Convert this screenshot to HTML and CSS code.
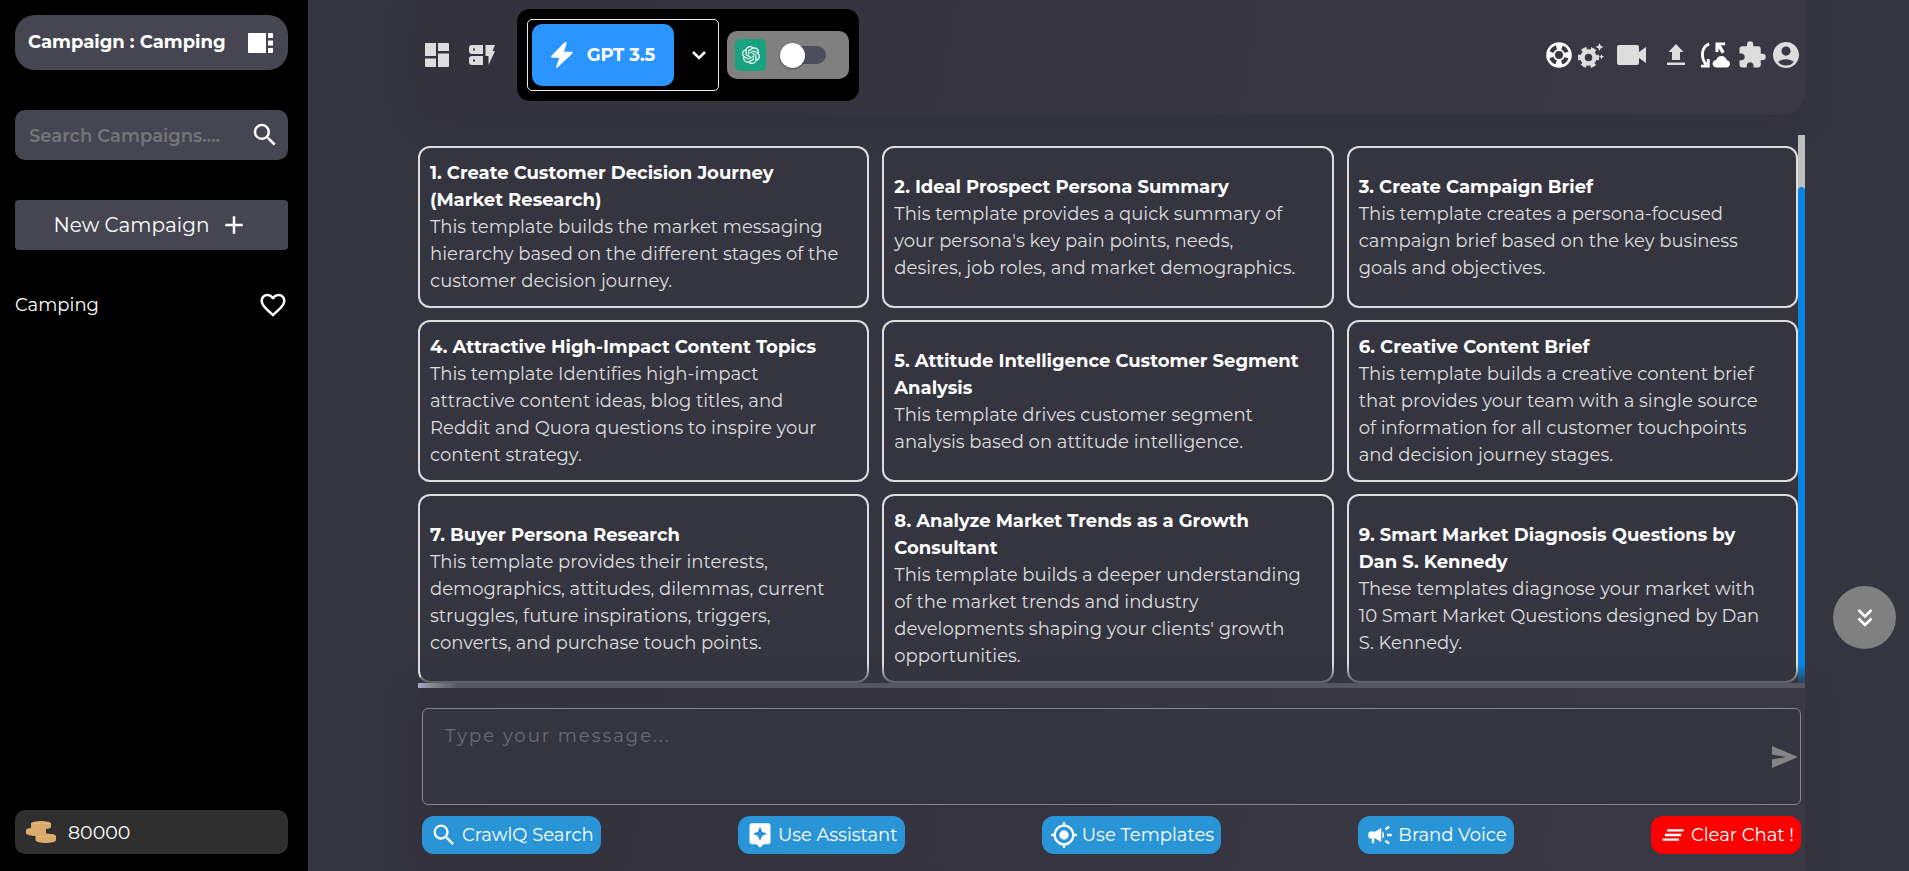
FILE: index.html
```html
<!DOCTYPE html>
<html lang="en">
<head>
  <meta charset="UTF-8" />
  <meta name="viewport" content="width=device-width, initial-scale=1" />
  <title>CrawlQ</title>
  <link rel="stylesheet" href="styles.css">
</head>
<body>
<aside class="sidebar">
  <div class="campaign-head">
    <span>Campaign : Camping</span>
    <button class="icon-btn" aria-label="Toggle sidebar">
      <svg width="26" height="20" viewBox="0 0 26 20"><path d="M0 1a1 1 0 0 1 1-1h17v20H1a1 1 0 0 1-1-1zM20 0h4a1 1 0 0 1 1 1v4h-5zM20 7.500h5v5h-5zM20 15h5v4a1 1 0 0 1-1 1h-4z"/></svg>
    </button>
  </div>
  <div class="search">
    <input type="text" placeholder="Search Campaigns...." aria-label="Search campaigns">
    <button class="icon-btn" aria-label="Search">
      <svg width="30" height="30" viewBox="0 0 24 24"><path d="M15.500 14h-.79l-.28-.27A6.470 6.470 0 0 0 16 9.500 6.500 6.500 0 1 0 9.500 16c1.610 0 3.090-.59 4.230-1.570l.27.28v.79l5 4.990L20.490 19l-4.990-5zm-6 0C7.010 14 5 11.990 5 9.500S7.010 5 9.500 5 14 7.010 14 9.500 11.990 14 9.500 14z"/></svg>
    </button>
  </div>
  <button class="new-campaign">
    New Campaign
    <svg width="30" height="30" viewBox="0 0 24 24"><path d="M19 13h-6v6h-2v-6H5v-2h6V5h2v6h6v2z"/></svg>
  </button>
  <div class="campaign-row">
    <a href="#">Camping</a>
    <button class="icon-btn" aria-label="Favourite">
      <svg width="30" height="30" viewBox="0 0 24 24"><path d="M16.500 3c-1.740 0-3.410.81-4.500 2.090C10.910 3.810 9.240 3 7.500 3 4.420 3 2 5.420 2 8.500c0 3.780 3.400 6.860 8.550 11.540L12 21.350l1.450-1.320C18.600 15.360 22 12.280 22 8.500 22 5.420 19.580 3 16.500 3zm-4.400 15.550-.1.100-.1-.1C7.140 14.240 4 11.390 4 8.500 4 6.500 5.500 5 7.500 5c1.540 0 3.040.99 3.570 2.360h1.870C13.460 5.990 14.960 5 16.500 5c2 0 3.500 1.500 3.500 3.500 0 2.890-3.140 5.740-7.900 10.050z"/></svg>
    </button>
  </div>
  <div class="tokens">
    <svg width="30" height="22" viewBox="0 0 30 22"><g fill="#d8ab6a"><path d="M5 2.500C5 1 10 0 15 0s10 1 10 2.500V6c0 1-2 1.600-5 2v4c0 2-5 3-10 3S0 14 0 12V9c0-1 2-1.800 5-2z"/><path d="M9.500 15c0-1.500 5-2.500 10.200-2.500S30 13.500 30 15v4c0 1.800-5 3-10.200 3S9.500 21 9.500 19z"/></g><path d="M7 2.600h17M2 9h3M12 15.400h17" stroke="#f0cf97" stroke-width=".8" stroke-dasharray="1 1" fill="none"/></svg>
    <span>80000</span>
  </div>
</aside>

<main class="main">
  <header class="topbar">
    <div class="tools-left">
      <button class="icon-btn" aria-label="Dashboard">
        <svg width="24" height="24" viewBox="0 0 24 24"><path d="M1 0h10v13H0V1a1 1 0 0 1 1-1zM13 0h10a1 1 0 0 1 1 1v7H13zM13 10.500h11V23a1 1 0 0 1-1 1H13zM0 15.500h11V24H1a1 1 0 0 1-1-1z"/></svg>
      </button>
      <button class="icon-btn" aria-label="Prompts">
        <svg width="26" height="20" viewBox="0 0 26 20"><path fill-rule="evenodd" d="M3 0h11v9H3a3 3 0 0 1-3-3V3a3 3 0 0 1 3-3zm1 3.500v2h2v-2zM3 11h11v9H3a3 3 0 0 1-3-3v-3a3 3 0 0 1 3-3zm1 3.500v2h2v-2zM16.500 0H26l-2.500 6H26l-6.500 14v-9h-3z"/></svg>
      </button>
    </div>
    <div class="model-panel">
      <div class="model-select">
        <button class="model-btn">
          <svg width="22" height="26" viewBox="0 0 22 26"><path d="M14.500 0c1 0 1.300.7 1.100 1.500L13 9.800h7.200c1.500 0 1.700 1.300.7 2.200L6.500 25.500c-.8.700-1.700.2-1.400-.8l3.200-9H1.500C0 15.700-.4 14.300.6 13.400L13.400.5c.3-.3.700-.5 1.100-.5z"/></svg>
          GPT 3.5
        </button>
        <button class="icon-btn chevron" aria-label="Choose model">
          <svg width="16" height="10" viewBox="0 0 16 10"><path d="M2 2l6 6 6-6" fill="none" stroke="#fff" stroke-width="2.600"/></svg>
        </button>
      </div>
      <label class="plugin">
        <span class="plugin-logo">
          <svg width="18" height="18" viewBox="0 0 24 24"><path d="M22.282 9.821a5.985 5.985 0 0 0-.516-4.910 6.046 6.046 0 0 0-6.510-2.900A6.065 6.065 0 0 0 4.981 4.182a5.985 5.985 0 0 0-3.998 2.900 6.046 6.046 0 0 0 .743 7.097 5.980 5.980 0 0 0 .51 4.911 6.051 6.051 0 0 0 6.515 2.900A5.985 5.985 0 0 0 13.260 24a6.056 6.056 0 0 0 5.772-4.206 5.990 5.990 0 0 0 3.998-2.900 6.056 6.056 0 0 0-.748-7.073zM13.260 22.430a4.476 4.476 0 0 1-2.877-1.040l.142-.081 4.779-2.758a.795.795 0 0 0 .393-.681v-6.737l2.020 1.169a.071.071 0 0 1 .038.052v5.583a4.504 4.504 0 0 1-4.495 4.493zM3.600 18.304a4.471 4.471 0 0 1-.535-3.014l.142.085 4.783 2.759a.771.771 0 0 0 .781 0l5.843-3.369v2.332a.08.08 0 0 1-.033.062L9.740 19.950a4.500 4.500 0 0 1-6.140-1.646zM2.341 7.896a4.485 4.485 0 0 1 2.366-1.973V11.600a.766.766 0 0 0 .388.677l5.815 3.355-2.020 1.168a.076.076 0 0 1-.071 0l-4.830-2.787A4.504 4.504 0 0 1 2.341 7.872zm16.596 3.856l-5.833-3.388L15.119 7.200a.076.076 0 0 1 .071 0l4.830 2.791a4.494 4.494 0 0 1-.676 8.105v-5.678a.79.79 0 0 0-.407-.666zm2.011-3.023l-.142-.085-4.774-2.782a.776.776 0 0 0-.785 0L9.409 9.230V6.897a.066.066 0 0 1 .028-.061l4.830-2.787a4.500 4.500 0 0 1 6.681 4.660zM8.306 12.863l-2.020-1.164a.08.08 0 0 1-.038-.057V6.075a4.500 4.500 0 0 1 7.376-3.453l-.142.081-4.779 2.758a.795.795 0 0 0-.393.681zm1.098-2.365l2.602-1.500 2.607 1.500v2.999l-2.597 1.500-2.607-1.500z"/></svg>
        </span>
        <input type="checkbox" class="switch" aria-label="ChatGPT">
      </label>
    </div>
    <nav class="tools-right">
      <button class="icon-btn bright" aria-label="Support">
        <svg width="26" height="26" viewBox="0 0 26 26"><g fill="none" stroke="#fff"><circle cx="13" cy="13" r="11.500" stroke-width="2.600"/><circle cx="13" cy="13" r="8" stroke-width="6" stroke-dasharray="5.600 6.966" transform="rotate(-20 13 13)"/><circle cx="13" cy="13" r="5" stroke-width="2"/></g></svg>
      </button>
      <button class="icon-btn" aria-label="Settings">
        <svg width="26" height="26" viewBox="0 0 26 26"><circle cx="10.500" cy="15.500" r="6" fill="none" stroke="#ddd" stroke-width="4.500"/><circle cx="10.500" cy="15.500" r="8.800" fill="none" stroke="#ddd" stroke-width="3.600" stroke-dasharray="5.200 4.015" transform="rotate(-17 10.500 15.500)"/><path d="M21.500 1l1.200 2.800 2.800 1.200-2.800 1.200-1.200 2.800-1.200-2.800-2.800-1.200 2.800-1.200zM23.500 12l.8 1.900 1.900.8-1.900.8-.8 1.900-.8-1.900-1.900-.8 1.900-.8z"/></svg>
      </button>
      <button class="icon-btn video" aria-label="Video">
        <svg width="29" height="20" viewBox="0 0 29 20"><path d="M2 0h18a2 2 0 0 1 2 2v5l7-5v16l-7-5v5a2 2 0 0 1-2 2H2a2 2 0 0 1-2-2V2a2 2 0 0 1 2-2z"/></svg>
      </button>
      <button class="icon-btn upload" aria-label="Upload">
        <svg width="18" height="22" viewBox="0 0 18 22"><path d="M9 0l7.500 8H13v8H5V8H1.500zM0 18.500h18V21H0z"/></svg>
      </button>
      <button class="icon-btn bright" aria-label="Sync">
        <svg width="31" height="26" viewBox="0 0 32 26"><path d="M9.500 1.500C1 5 .5 16 6.500 23" fill="none" stroke="#fff" stroke-width="3"/><path d="M1 23h6v-6h3v9H1zM16 0h10v3h-4.500l4 7-3 1.500L19 6v4h-3zM17.500 26c-2.600 0-4.500-1.600-4.500-4 0-2.200 1.500-3.700 3.800-3.900.6-2.500 2.700-4.100 5.300-4.100 2.800 0 5 1.800 5.400 4.400 2.100.1 3.500 1.600 3.500 3.600 0 2.300-1.700 4-4 4z"/></svg>
      </button>
      <button class="icon-btn" aria-label="Extensions">
        <svg width="30" height="30" viewBox="0 0 24 24"><path d="M20.500 11H19V7c0-1.100-.9-2-2-2h-4V3.500a2.500 2.500 0 0 0-5 0V5H4c-1.100 0-1.990.9-1.990 2v3.800H3.500c1.490 0 2.700 1.210 2.700 2.700s-1.210 2.700-2.700 2.700H2V20c0 1.100.9 2 2 2h3.800v-1.500c0-1.490 1.210-2.700 2.700-2.700s2.700 1.210 2.700 2.700V22H17c1.100 0 2-.9 2-2v-4h1.500a2.500 2.500 0 0 0 0-5z"/></svg>
      </button>
      <button class="icon-btn" aria-label="Account">
        <svg width="26" height="26" viewBox="2 2 20 20"><path d="M12 2C6.480 2 2 6.480 2 12s4.480 10 10 10 10-4.480 10-10S17.520 2 12 2zm0 3.500c1.930 0 3.500 1.570 3.500 3.500s-1.570 3.500-3.500 3.500S8.500 10.930 8.500 9s1.570-3.500 3.500-3.500zM12 20a8 8 0 0 1-6-2.700c1.400-1.400 3.900-2.100 6-2.100s4.600.7 6 2.100A8 8 0 0 1 12 20z"/></svg>
      </button>
    </nav>
  </header>

  <section class="templates">
    <div class="cards">
      <article class="card"><h3>1. Create Customer Decision Journey (Market Research)</h3><p>This template builds the market messaging hierarchy based on the different stages of the customer decision journey.</p></article>
      <article class="card"><h3>2. Ideal Prospect Persona Summary</h3><p>This template provides a quick summary of your persona's key pain points, needs, desires, job roles, and market demographics.</p></article>
      <article class="card"><h3>3. Create Campaign Brief</h3><p>This template creates a persona-focused campaign brief based on the key business goals and objectives.</p></article>
      <article class="card"><h3>4. Attractive High-Impact Content Topics</h3><p>This template Identifies high-impact attractive content ideas, blog titles, and Reddit and Quora questions to inspire your content strategy.</p></article>
      <article class="card"><h3>5. Attitude Intelligence Customer Segment Analysis</h3><p>This template drives customer segment analysis based on attitude intelligence.</p></article>
      <article class="card"><h3>6. Creative Content Brief</h3><p>This template builds a creative content brief that provides your team with a single source of information for all customer touchpoints and decision journey stages.</p></article>
      <article class="card"><h3>7. Buyer Persona Research</h3><p>This template provides their interests, demographics, attitudes, dilemmas, current struggles, future inspirations, triggers, converts, and purchase touch points.</p></article>
      <article class="card"><h3>8. Analyze Market Trends as a Growth Consultant</h3><p>This template builds a deeper understanding of the market trends and industry developments shaping your clients' growth opportunities.</p></article>
      <article class="card"><h3>9. Smart Market Diagnosis Questions by Dan S. Kennedy</h3><p>These templates diagnose your market with 10 Smart Market Questions designed by Dan S. Kennedy.</p></article>
    </div>
    <div class="scroll-y"><span class="thumb"></span></div>
    <div class="scroll-x"></div>
    <div class="fade"></div>
  </section>

  <footer class="composer">
    <div class="message">
      <textarea placeholder="Type your message..." aria-label="Message"></textarea>
      <button class="icon-btn send" aria-label="Send">
        <svg width="26" height="22" viewBox="0 0 26 22"><path d="M0 0l26 11L0 22v-8.500L14 11 0 8.500z"/></svg>
      </button>
    </div>
    <div class="actions">
      <button class="action">
        <svg width="28" height="28" viewBox="0 0 24 24"><path d="M15.500 14h-.79l-.28-.27A6.470 6.470 0 0 0 16 9.500 6.500 6.500 0 1 0 9.500 16c1.610 0 3.090-.59 4.230-1.570l.27.28v.79l5 4.990L20.490 19l-4.990-5zm-6 0C7.010 14 5 11.990 5 9.500S7.010 5 9.500 5 14 7.010 14 9.500 11.990 14 9.500 14z"/></svg>
        CrawlQ Search
      </button>
      <button class="action">
        <svg width="28" height="28" viewBox="0 0 24 24"><path d="M19 2H5a2 2 0 0 0-2 2v14a2 2 0 0 0 2 2h4l3 3 3-3h4a2 2 0 0 0 2-2V4a2 2 0 0 0-2-2zm-5.120 10.880L12 17l-1.880-4.120L6 11l4.120-1.880L12 5l1.880 4.120L18 11z"/></svg>
        Use Assistant
      </button>
      <button class="action">
        <svg width="28" height="28" viewBox="0 0 24 24"><path d="M12 8a4 4 0 1 0 0 8 4 4 0 0 0 0-8zm8.940 3A8.994 8.994 0 0 0 13 3.060V1h-2v2.060A8.994 8.994 0 0 0 3.060 11H1v2h2.060A8.994 8.994 0 0 0 11 20.940V23h2v-2.060A8.994 8.994 0 0 0 20.940 13H23v-2zM12 19a7 7 0 1 1 0-14 7 7 0 0 1 0 14z"/></svg>
        Use Templates
      </button>
      <button class="action">
        <svg width="28" height="28" viewBox="0 0 24 24"><path d="M18 11v2h4v-2zm-2 6.610c.96.71 2.210 1.650 3.200 2.390.4-.53.800-1.070 1.200-1.600-.99-.74-2.240-1.680-3.200-2.400-.4.540-.8 1.080-1.200 1.610zM20.400 5.600c-.4-.53-.8-1.070-1.200-1.600-.99.740-2.240 1.680-3.200 2.400.4.530.8 1.070 1.200 1.600.96-.72 2.210-1.650 3.200-2.400zM4 9c-1.100 0-2 .9-2 2v2c0 1.100.9 2 2 2h1v4h2v-4h1l5 3V6L8 9zm11.500 3c0-1.330-.58-2.530-1.500-3.350v6.690c.92-.81 1.500-2.010 1.500-3.340z"/></svg>
        Brand Voice
      </button>
      <button class="action danger">
        <svg width="28" height="28" viewBox="0 0 24 24"><path d="M5 13h14v-2H5zm-2 4h14v-2H3zM7 7v2h14V7z"/></svg>
        Clear Chat !
      </button>
    </div>
  </footer>
</main>

<button class="jump" aria-label="Scroll down">
  <svg width="16" height="20" viewBox="0 0 16 20"><path d="M1.500 2L8 8.500 14.500 2M1.500 10.500L8 17l6.500-6.500" fill="none" stroke="#fff" stroke-width="2.500"/></svg>
</button>
</body>
</html>
```

FILE: styles.css
```css
* {
  box-sizing: border-box;
}
body {
  margin: 0;
  min-height: 100vh;
  display: flex;
  background: #353540;
  color: #fff;
  font-family: Montserrat, Inter, sans-serif;
  font-size: 18px;
  line-height: 27px;
  overflow: hidden;
}
button, input, textarea {
  font: inherit;
  color: inherit;
}
button {
  cursor: pointer;
  border: none;
  padding: 0;
}
svg {
  display: block;
  flex: none;
  fill: #fff;
}
.icon-btn {
  background: none;
  display: flex;
  align-items: center;
  justify-content: center;
}

/* sidebar */
.sidebar {
  flex: none;
  width: 308px;
  min-height: 100vh;
  padding: 15px 20px 17px 15px;
  background: #000;
  display: flex;
  flex-direction: column;
}
.campaign-head {
  height: 55px;
  padding: 0 14px 0 13px;
  display: flex;
  align-items: center;
  justify-content: space-between;
  background: #454652;
  border-radius: 20px;
  font-weight: 700;
}
.search {
  height: 50px;
  margin-top: 40px;
  padding: 0 8px 0 14px;
  display: flex;
  align-items: center;
  background: #454652;
  border-radius: 10px;
}
.search input {
  flex: 1;
  min-width: 0;
  padding: 2px 0 0;
  border: none;
  outline: none;
  background: none;
  font-weight: 600;
}
.search input::placeholder {
  color: #757575;
}
.new-campaign {
  height: 50px;
  margin-top: 40px;
  display: flex;
  align-items: center;
  justify-content: center;
  gap: 10px;
  background: #454652;
  border-radius: 4px;
  font-size: 20px;
}
.campaign-row {
  margin-top: 40px;
  display: flex;
  align-items: center;
  justify-content: space-between;
}
.campaign-row a {
  color: #fff;
  text-decoration: none;
}
.tokens {
  height: 44px;
  margin-top: auto;
  padding: 0 11px;
  display: flex;
  align-items: center;
  gap: 12px;
  background: #2f2f2f;
  border-radius: 10px;
  font-size: 19px;
}

/* main column */
.main {
  flex: 1;
  min-width: 0;
  padding: 0 104px 0 110px;
  display: flex;
  flex-direction: column;
}
.topbar {
  height: 115px;
  padding: 9px 6px 14px 7px;
  display: flex;
  align-items: center;
  border-radius: 0 0 24px 24px;
  background: linear-gradient(100deg, #32313c, #393844);
  box-shadow: 0 4px 24px #32313c;
}
.topbar .icon-btn svg {
  fill: #ddd;
}
.topbar .bright svg {
  fill: #fff;
}
.tools-left {
  display: flex;
  gap: 20px;
  margin-right: 22px;
}
.model-panel {
  height: 92px;
  padding: 10px;
  display: flex;
  align-items: center;
  gap: 8px;
  background: #000;
  border-radius: 13px;
}
.model-select {
  width: 192px;
  height: 72px;
  padding: 4px;
  display: flex;
  border: 1px solid #eee;
  border-radius: 5px;
}
.model-btn {
  width: 142px;
  display: flex;
  align-items: center;
  justify-content: center;
  gap: 14px;
  background: #2b95ff;
  border-radius: 10px;
  font-weight: 700;
}
.chevron {
  flex: 1;
  padding-left: 10px;
}
.plugin {
  width: 122px;
  height: 48px;
  padding: 8px;
  display: flex;
  align-items: center;
  gap: 14px;
  background: #808080;
  border-radius: 10px;
}
.plugin-logo {
  width: 31px;
  height: 32px;
  display: flex;
  align-items: center;
  justify-content: center;
  background: #19a27f;
  border-radius: 5px;
}
.switch {
  appearance: none;
  width: 46px;
  height: 18px;
  margin: 0;
  display: flex;
  align-items: center;
  background: #4c4e5b;
  border-radius: 9px;
}
.switch::before {
  content: "";
  width: 25px;
  height: 25px;
  flex: none;
  border-radius: 50%;
  background: #fff;
  box-shadow: 0 1px 2px #444;
}
.switch:checked::before {
  margin-left: 21px;
}
.tools-right {
  margin-left: auto;
  display: flex;
  align-items: center;
  gap: 6px;
}
.video {
  width: 42px;
}
.upload {
  width: 36px;
}

/* template cards */
.templates {
  flex: 1;
  min-height: 0;
  margin-top: 20px;
  position: relative;
  display: grid;
  grid-template-columns: 1fr 7px;
  grid-template-rows: 1fr 5px;
}
.cards {
  padding-top: 11px;
  display: grid;
  grid-template-columns: repeat(3, 1fr);
  align-content: start;
  gap: 12px 13px;
}
.card {
  padding: 12px 27px 11px 10px;
  border: 2px solid #ddd;
  border-radius: 12px;
  display: flex;
  flex-direction: column;
  justify-content: center;
}
.card h3, .card p {
  margin: 0;
  font-size: 18px;
}
.card h3 {
  font-weight: 700;
}
.card p {
  color: #ddd;
}
.scroll-y {
  background: #bfbfbf;
  display: flex;
  padding-top: 52px;
}
.thumb {
  flex: 1;
  background: #0984e3;
  border-radius: 4px 4px 0 0;
}
.scroll-x {
  grid-column: 1 / 3;
  z-index: 1;
  background: linear-gradient(90deg, #a0a8c4, #85868c 15px, #55575f 40px, #55575f);
}
/* shade rising from the message box over the last row */
.fade {
  position: absolute;
  left: 0;
  right: 0;
  bottom: 0;
  height: 24px;
  border-radius: 24px 0 0 0;
  background: linear-gradient(rgba(53, 53, 64, 0), rgba(53, 53, 64, 0.75) 75%);
  pointer-events: none;
}

/* message box */
.composer {
  padding: 20px 4px 17px;
  background: linear-gradient(100deg, #32313c, #393844);
  box-shadow: 0 8px 24px #32313c;
}
.message {
  height: 97px;
  padding-right: 2px;
  display: flex;
  align-items: center;
  background: #353540;
  border: 1px solid #85858a;
  border-radius: 6px;
}
.message textarea {
  flex: 1;
  height: 95px;
  padding: 14px 22px;
  border: none;
  outline: none;
  resize: none;
  background: none;
  letter-spacing: 2px;
}
.message textarea::placeholder {
  color: #6c6b75;
}
.send svg {
  fill: #858585;
}
.actions {
  margin-top: 11px;
  display: flex;
  justify-content: space-between;
}
.action {
  height: 38px;
  padding: 0 7px 0 8px;
  display: flex;
  align-items: center;
  gap: 4px;
  background: #2a95d6;
  border-radius: 12px;
}
.action.danger {
  background: #f00;
}
.jump {
  position: fixed;
  right: 13px;
  bottom: 222px;
  width: 63px;
  height: 63px;
  display: flex;
  align-items: center;
  justify-content: center;
  background: #808080;
  border-radius: 50%;
}
```
